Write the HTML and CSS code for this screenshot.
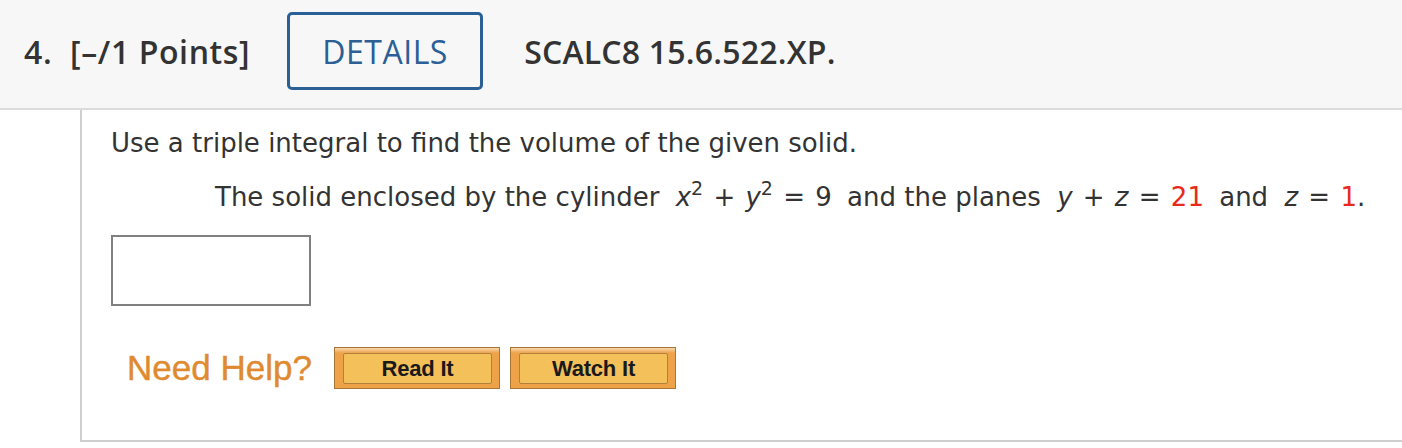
FILE: index.html
```html
<!DOCTYPE html>
<html>
<head>
<meta charset="utf-8">
<link rel="stylesheet" href="styles.css">
</head>
<body>
<div class="header">
  <div class="qnum">4.&nbsp; [–/1 Points]</div>
  <div class="details">DETAILS</div>
  <div class="code">SCALC8 15.6.522.XP.</div>
</div>
<div class="content">
  <p class="q1">Use a triple integral to find the volume of the given solid.</p>
  <p class="q2">The solid enclosed by the cylinder <span class="m"><i>x</i><sup>2</sup> + <i>y</i><sup>2</sup> = 9</span> and the planes <span class="m"><i>y</i> + <i>z</i> = <span class="red">21</span></span> and <span class="m last"><i>z</i> = <span class="red">1</span></span>.</p>
  <div class="answer"></div>
  <div class="help">
    <span class="need">Need Help?</span>
    <span class="btn"><span class="btn-in">Read It</span></span>
    <span class="btn"><span class="btn-in">Watch It</span></span>
  </div>
</div>
</body>
</html>
```
FILE: styles.css
```css
html, body { margin: 0; padding: 0; background: #fff; }
body { width: 1402px; height: 448px; overflow: hidden; }
.header {
  background: #f7f7f7;
  border-bottom: 2px solid #dcdcdc;
  height: 96px;
  padding: 12px 0 0 24px;
  display: flex;
  align-items: flex-start;
  font-family: "Open Sans", sans-serif;
  font-weight: 600;
  color: #333;
}
.qnum, .code {
  height: 78px;
  display: flex;
  align-items: center;
  font-size: 32px;
  letter-spacing: 0.6px;
}
.details {
  margin-left: 37px;
  width: 190px;
  height: 72px;
  border: 3px solid #2b6096;
  border-radius: 5px;
  display: flex;
  align-items: center;
  justify-content: center;
  color: #2b5f96;
  font-size: 32px;
  font-weight: 500;
  letter-spacing: 0.5px;
}
.code { margin-left: 41px; letter-spacing: 0.2px; }
.content {
  margin-left: 80px;
  border-left: 2px solid #cfcfcf;
  border-bottom: 2px solid #cfcfcf;
  height: 330px;
  padding-left: 29px;
  font-family: "DejaVu Sans", Verdana, sans-serif;
  color: #333;
  font-size: 26px;
}
.q1 { margin: 0; padding-top: 17px; line-height: 32px; }
.q2 { margin: 22px 0 0 104px; line-height: 32px; }
.m { margin: 0 7px 0 8px; word-spacing: 2px; }
.m.last { margin-right: 0; }
.m i { font-style: italic; }
sup { font-size: 19px; line-height: 0; vertical-align: 11px; }
.red { color: #e8291c; }
.answer {
  margin-top: 22px;
  width: 196px;
  height: 67px;
  border: 2px solid #808080;
}
.help {
  margin-top: 41px;
  display: flex;
  align-items: center;
  height: 42px;
}
.need {
  font-family: "Liberation Sans", Arial, sans-serif;
  font-size: 35px;
  color: #e08a30;
  -webkit-text-stroke: 0.4px #e08a30;
  margin-left: 16px;
  width: 207px;
}
.btn {
  box-sizing: border-box;
  width: 166px;
  height: 42px;
  margin-right: 10px;
  border: 1px solid #a87534;
  background: linear-gradient(#f6d9b0 0, #eea24a 5px, #eea24a 100%);
  padding: 5px 7px 4px 8px;
  display: flex;
}
.btn-in {
  flex: 1;
  border: 1px solid #b0813c;
  border-radius: 2px;
  background: #f3c05a;
  display: flex;
  align-items: center;
  justify-content: center;
  font-family: "Liberation Sans", Arial, sans-serif;
  font-weight: bold;
  font-size: 22px;
  letter-spacing: -0.2px;
  color: #1a1a1a;
}
```
